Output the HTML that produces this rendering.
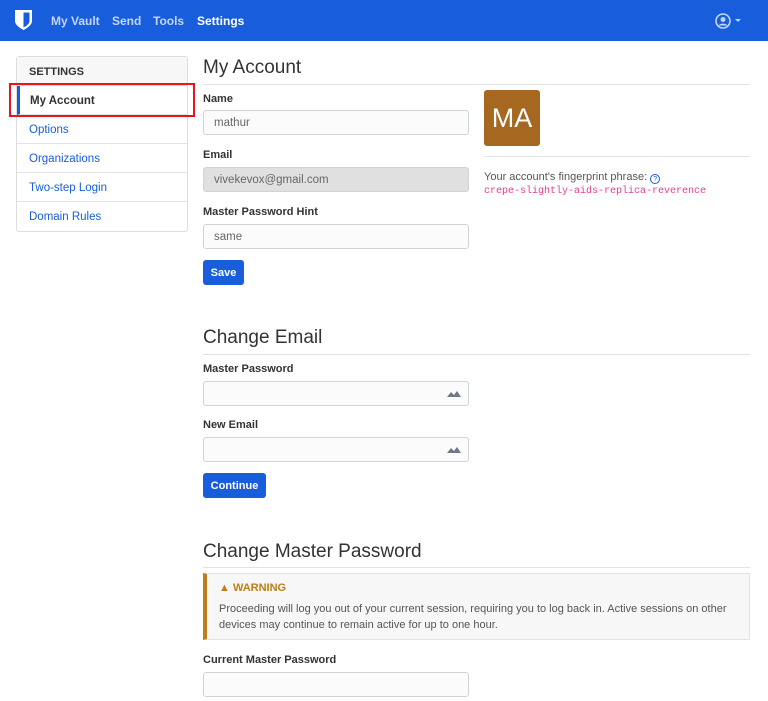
<!DOCTYPE html>
<html><head><meta charset="utf-8"><style>
*{box-sizing:border-box;margin:0;padding:0}
body{width:768px;height:701px;overflow:hidden;background:#fff;font-family:"Liberation Sans",sans-serif;color:#333;font-size:12px;position:relative}
.a{position:absolute}
.nav{left:0;top:0;width:768px;height:41px;background:#175ddc}
.nl{top:14px;font-size:12px;font-weight:bold;color:#c5d6f5}
.side{left:16px;top:56px;width:172px;height:176px;border:1px solid #ddd;border-radius:3px;background:#fff}
.sh{left:0;top:0;width:170px;height:29px;background:#f7f7f7;border-bottom:1px solid #ddd;font-weight:bold;font-size:11px;padding:9px 12px;color:#333}
.si{left:0;width:170px;height:29px;border-bottom:1px solid #e3e3e3;padding:9px 12px;color:#175ddc;font-size:11.5px}
h2{position:absolute;font-weight:normal;font-size:19px;color:#333;left:203px}
.hr{height:1px;background:#e3e3e3}
.lb{left:203px;font-weight:bold;font-size:11px;color:#333}
.in{left:203px;width:266px;height:25px;border:1px solid #ced4da;border-radius:3px;background:#fbfbfb;padding:6px 10px;color:#666;font-size:11.5px}
.btn{background:#175ddc;color:#fff;font-weight:bold;font-size:11px;border-radius:3px;text-align:center;padding-top:7px;height:25px}
</style></head><body>
<div class="a nav">
<svg class="a" style="left:15px;top:10px" width="17" height="20" viewBox="0 0 17 20"><path d="M0 0H17V11C17 15 12 18 8.5 20C5 18 0 15 0 11Z" fill="#fff"/><path d="M8.5 2.5H14.5V11C14.5 14 11 16.3 8.5 17.5Z" fill="#175ddc"/></svg>
<div class="a nl" style="left:51px">My Vault</div>
<div class="a nl" style="left:112px">Send</div>
<div class="a nl" style="left:153px">Tools</div>
<div class="a nl" style="left:197px;color:#fff">Settings</div>
<svg class="a" style="left:715px;top:13px" width="16" height="16" viewBox="0 0 16 16"><circle cx="8" cy="8" r="7" fill="none" stroke="#c5d6f5" stroke-width="1.6"/><circle cx="8" cy="6.5" r="2.5" fill="#c5d6f5"/><path d="M3.5 12.5C5 10 11 10 12.5 12.5" fill="#c5d6f5"/></svg>
<div class="a" style="left:735px;top:19px;border-left:3px solid transparent;border-right:3px solid transparent;border-top:3px solid #c5d6f5"></div>
</div>

<div class="a side">
<div class="a sh">SETTINGS</div>
<div class="a si" style="top:29px;color:#333;font-weight:bold;border-left:3px solid #175ddc;padding-left:10px">My Account</div>
<div class="a si" style="top:58px">Options</div>
<div class="a si" style="top:87px">Organizations</div>
<div class="a si" style="top:116px">Two-step Login</div>
<div class="a si" style="top:145px;border-bottom:none">Domain Rules</div>
</div>
<div class="a" style="left:9px;top:83px;width:186px;height:34px;border:2px solid #e8161c"></div>

<h2 style="top:57px">My Account</h2>
<div class="a hr" style="left:203px;top:84px;width:547px"></div>
<div class="a lb" style="top:93px">Name</div>
<div class="a in" style="top:110px">mathur</div>
<div class="a lb" style="top:149px">Email</div>
<div class="a in" style="top:167px;background:#e0e0e0">vivekevox@gmail.com</div>
<div class="a lb" style="top:206px">Master Password Hint</div>
<div class="a in" style="top:224px">same</div>
<div class="a btn" style="left:203px;top:260px;width:41px">Save</div>

<div class="a" style="left:484px;top:90px;width:56px;height:56px;background:#a66720;border-radius:3px;color:#fff;font-size:27px;text-align:center;line-height:56px">MA</div>
<div class="a hr" style="left:484px;top:156px;width:266px"></div>
<div class="a" style="left:484px;top:171px;font-size:11px;color:#555">Your account's fingerprint phrase: <span style="display:inline-block;width:10px;height:10px;border:1px solid #175ddc;border-radius:50%;font-size:7px;color:#175ddc;text-align:center;line-height:9px;vertical-align:-1px">?</span></div>
<div class="a" style="left:484px;top:186px;font-family:'Liberation Mono',monospace;font-size:10px;color:#e83e8c">crepe-slightly-aids-replica-reverence</div>

<h2 style="top:327px">Change Email</h2>
<div class="a hr" style="left:203px;top:354px;width:547px"></div>
<div class="a lb" style="top:363px">Master Password</div>
<div class="a in" style="top:381px"></div>
<div class="a lb" style="top:419px">New Email</div>
<div class="a in" style="top:437px"></div>
<svg class="a" style="left:447px;top:390px" width="14" height="8"><path d="M0 7L4 2L7 5L10 1L14 7Z" fill="#6c7a89"/></svg>
<svg class="a" style="left:447px;top:446px" width="14" height="8"><path d="M0 7L4 2L7 5L10 1L14 7Z" fill="#6c7a89"/></svg>
<div class="a btn" style="left:203px;top:473px;width:63px">Continue</div>

<h2 style="top:541px">Change Master Password</h2>
<div class="a hr" style="left:203px;top:567px;width:547px"></div>
<div class="a" style="left:203px;top:573px;width:547px;height:67px;background:#f7f7f7;border:1px solid #e3e3e3;border-left:4px solid #bf7e16"></div>
<div class="a" style="left:219px;top:582px;font-weight:bold;font-size:11px;color:#bf7e16">&#9650; WARNING</div>
<div class="a" style="left:219px;top:601px;width:520px;font-size:11px;line-height:16px;color:#555">Proceeding will log you out of your current session, requiring you to log back in. Active sessions on other devices may continue to remain active for up to one hour.</div>
<div class="a lb" style="top:654px">Current Master Password</div>
<div class="a in" style="top:672px"></div>
</body></html>
